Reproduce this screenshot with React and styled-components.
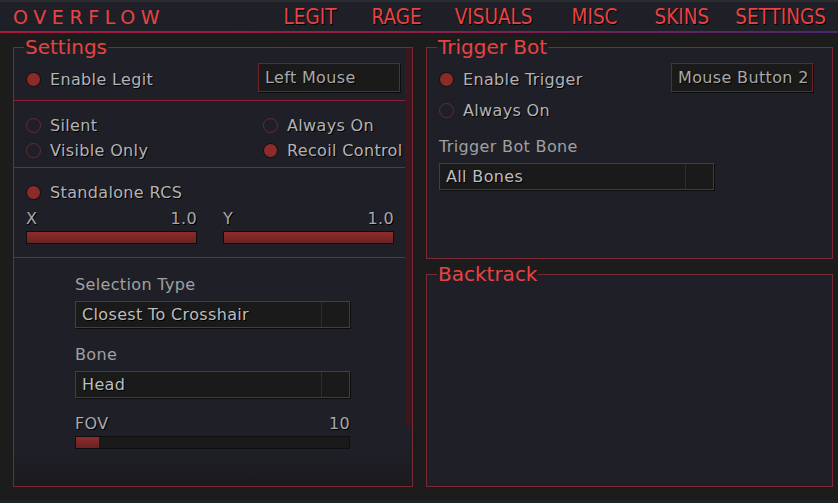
import React from 'react';
import styled, { createGlobalStyle } from 'styled-components';

const Global = createGlobalStyle`
  html, body { margin: 0; padding: 0; background: #1c1c1c; }
  body { width: 838px; height: 503px; overflow: hidden; font-family: "DejaVu Sans", Verdana, sans-serif; }
  * { box-sizing: border-box; }
`;

const Frame = styled.div`
  width: 838px;
  height: 503px;
  display: flex;
  flex-direction: column;
  background: #1c1c1c;
`;

const TopStrip = styled.div`
  height: 2px;
  background: #2b2c30;
`;

const Header = styled.header`
  height: 29px;
  display: flex;
  align-items: center;
  background: #1e1f27;
  padding-left: 13px;
`;

const HeaderLine = styled.div`
  height: 2px;
  background: linear-gradient(90deg, #a8193d 0%, #901c47 50%, #4b2670 100%);
`;

const Brand = styled.div`
  font-size: 19px;
  color: #e84343;
  letter-spacing: 5.6px;
  margin-right: auto;
`;

const Nav = styled.nav`
  display: flex;
  align-items: center;
  padding-right: 12px;
`;

const NavItem = styled.span`
  font-family: "DejaVu Sans Condensed", "DejaVu Sans", sans-serif;
  font-stretch: condensed;
  font-size: 20.5px;
  color: #e84343;
  text-shadow: 1px 1px 0 #000;
  margin-left: ${p => p.$gap}px;
`;

const Main = styled.main`
  flex: 1;
  display: flex;
  gap: 13px;
  padding: 3px 5px 0 13px;
`;

const Column = styled.div`
  display: flex;
  flex-direction: column;
  gap: 4px;
  width: ${p => p.$w}px;
`;

const Panel = styled.fieldset`
  margin: 0;
  padding: 0;
  min-width: 0;
  border: 1px solid #7a2a35;
  background: ${p => p.$fade
    ? 'linear-gradient(180deg, #1f1f27 0%, #1f1f27 92%, #1a1a1e 100%)'
    : '#1f1f27'};
  height: ${p => p.$h}px;
  display: flex;
  flex-direction: column;
`;

const Title = styled.legend`
  margin-left: 10px;
  padding: 0 1px;
  font-size: 20px;
  line-height: 22px;
  color: #e84343;
`;

const PanelBody = styled.div`
  flex: 1;
  display: flex;
  min-height: 0;
`;

const Content = styled.div`
  flex: 1;
  display: flex;
  flex-direction: column;
`;

const ScrollTrack = styled.div`
  width: 6px;
  margin: -10px 1px 23px 0;
  background: #3b1820;
`;

const Section = styled.div`
  padding: ${p => p.$pad};
  border-bottom: ${p => (p.$divider ? '1px solid #8e1f3a' : 'none')};
  display: flex;
  flex-direction: column;
`;

const Row = styled.div`
  display: flex;
  align-items: center;
  justify-content: space-between;
  height: ${p => p.$h || 25}px;
  margin-top: ${p => p.$mt || 0}px;
`;

const Grid2 = styled.div`
  display: grid;
  grid-template-columns: 237px auto;
  grid-auto-rows: 25px;
  align-items: center;
`;

const Check = styled.div`
  display: flex;
  align-items: center;
  gap: 9px;
  padding-top: ${p => p.$lift || 2}px;
  font-size: 16px;
  letter-spacing: 0.35px;
  color: #b3b3b3;
  text-shadow: 1px 1px 0 #000;
  white-space: nowrap;
`;

const Dot = styled.span`
  width: 15px;
  height: 15px;
  border-radius: 50%;
  flex: none;
  border: 1px solid ${p => (p.$on ? '#0d0d0d' : '#6d2833')};
  background: ${p => (p.$on ? '#8d2a2a' : 'transparent')};
`;

const KeyButton = styled.div`
  width: 142px;
  height: 29px;
  display: flex;
  align-items: center;
  padding-left: 6px;
  background: #1a1a1a;
  border: 1px solid #6e2428;
  box-shadow: 1px 1px 0 #0c0c0c;
  font-size: 16px;
  letter-spacing: 0.35px;
  color: #a9a9a9;
  text-shadow: 1px 1px 0 #000;
  white-space: nowrap;
`;

const SliderGroup = styled.div`
  display: grid;
  grid-template-columns: repeat(${p => p.$cols}, ${p => p.$w}px);
  column-gap: 26px;
  margin-top: ${p => p.$mt || 0}px;
`;

const SliderHead = styled.div`
  display: flex;
  justify-content: space-between;
  font-size: 16px;
  line-height: 18px;
  letter-spacing: 0.35px;
  color: #a8a8a8;
  text-shadow: 1px 1px 0 #000;
`;

const Track = styled.div`
  height: 13px;
  margin-top: 3px;
  background: #1a1a1a;
  border: 1px solid #0e0e0e;
  display: flex;
`;

const Fill = styled.div`
  height: 100%;
  background: linear-gradient(180deg, #8e2b2b 0%, #6a2222 100%);
`;

const Label = styled.div`
  font-size: 16px;
  line-height: 18px;
  letter-spacing: 0.35px;
  color: #a0a0a0;
  margin-top: ${p => p.$mt || 0}px;
`;

const Combo = styled.div`
  width: 275px;
  height: 27px;
  margin-top: 7px;
  display: flex;
  background: #1a1a1a;
  border: 1px solid #6e2a2e;
  box-shadow: 1px 1px 0 #0c0c0c;
`;

const ComboText = styled.div`
  flex: 1;
  display: flex;
  align-items: center;
  padding-left: 6px;
  font-size: 16px;
  letter-spacing: 0.35px;
  color: #bdbdbd;
  text-shadow: 1px 1px 0 #000;
  border-right: 1px solid #4a2226;
`;

const ComboArrow = styled.div`
  width: 27px;
`;

const BottomStrip = styled.div`
  height: 3px;
  margin-top: 10px;
  background: #1b2527;
`;

const Slider = ({ label, value, pct }) => (
  <div>
    <SliderHead><span>{label}</span><span>{value}</span></SliderHead>
    <Track><Fill style={{ width: `${pct}%` }} /></Track>
  </div>
);

const Select = ({ value }) => (
  <Combo>
    <ComboText>{value}</ComboText>
    <ComboArrow />
  </Combo>
);

const Toggle = ({ on, lift, children }) => (
  <Check $lift={lift}><Dot $on={on} />{children}</Check>
);

const NAV = [
  ['LEGIT', 0],
  ['RAGE', 35],
  ['VISUALS', 33],
  ['MISC', 39],
  ['SKINS', 37],
  ['SETTINGS', 26],
];

export default function App() {
  return (
    <Frame>
      <Global />
      <TopStrip />
      <Header>
        <Brand>OVERFLOW</Brand>
        <Nav>
          {NAV.map(([n, g]) => (
            <NavItem key={n} $gap={g}>{n}</NavItem>
          ))}
        </Nav>
      </Header>
      <HeaderLine />
      <Main>
        <Column $w={400}>
          <Panel $h={451} $fade>
            <Title>Settings</Title>
            <PanelBody>
              <Content>
                <Section $divider $pad="5px 5px 8px 12px">
                  <Row $h={29}>
                    <Toggle on lift={4}>Enable Legit</Toggle>
                    <KeyButton>Left Mouse</KeyButton>
                  </Row>
                </Section>
                <Section $divider $pad="11px 0 5px 12px">
                  <Grid2>
                    <Toggle>Silent</Toggle>
                    <Toggle>Always On</Toggle>
                    <Toggle>Visible Only</Toggle>
                    <Toggle on>Recoil Control</Toggle>
                  </Grid2>
                </Section>
                <Section $divider $pad="10px 0 13px 12px">
                  <Row>
                    <Toggle on lift={3}>Standalone RCS</Toggle>
                  </Row>
                  <SliderGroup $cols={2} $w={171} $mt={7}>
                    <Slider label="X" value="1.0" pct={100} />
                    <Slider label="Y" value="1.0" pct={100} />
                  </SliderGroup>
                </Section>
                <Section $pad="18px 0 0 61px">
                  <Label>Selection Type</Label>
                  <Select value="Closest To Crosshair" />
                  <Label $mt={18}>Bone</Label>
                  <Select value="Head" />
                  <SliderGroup $cols={1} $w={275} $mt={17}>
                    <Slider label="FOV" value="10" pct={8.5} />
                  </SliderGroup>
                </Section>
              </Content>
              <ScrollTrack />
            </PanelBody>
          </Panel>
        </Column>
        <Column $w={407}>
          <Panel $h={223}>
            <Title>Trigger Bot</Title>
            <Content>
              <Section $pad="5px 19px 0 12px">
                <Row $h={29}>
                  <Toggle on lift={4}>Enable Trigger</Toggle>
                  <KeyButton>Mouse Button 2</KeyButton>
                </Row>
                <Row $mt={5}>
                  <Toggle>Always On</Toggle>
                </Row>
                <Label $mt={16}>Trigger Bot Bone</Label>
                <Select value="All Bones" />
              </Section>
            </Content>
          </Panel>
          <Panel $h={224}>
            <Title>Backtrack</Title>
          </Panel>
        </Column>
      </Main>
      <BottomStrip />
    </Frame>
  );
}
